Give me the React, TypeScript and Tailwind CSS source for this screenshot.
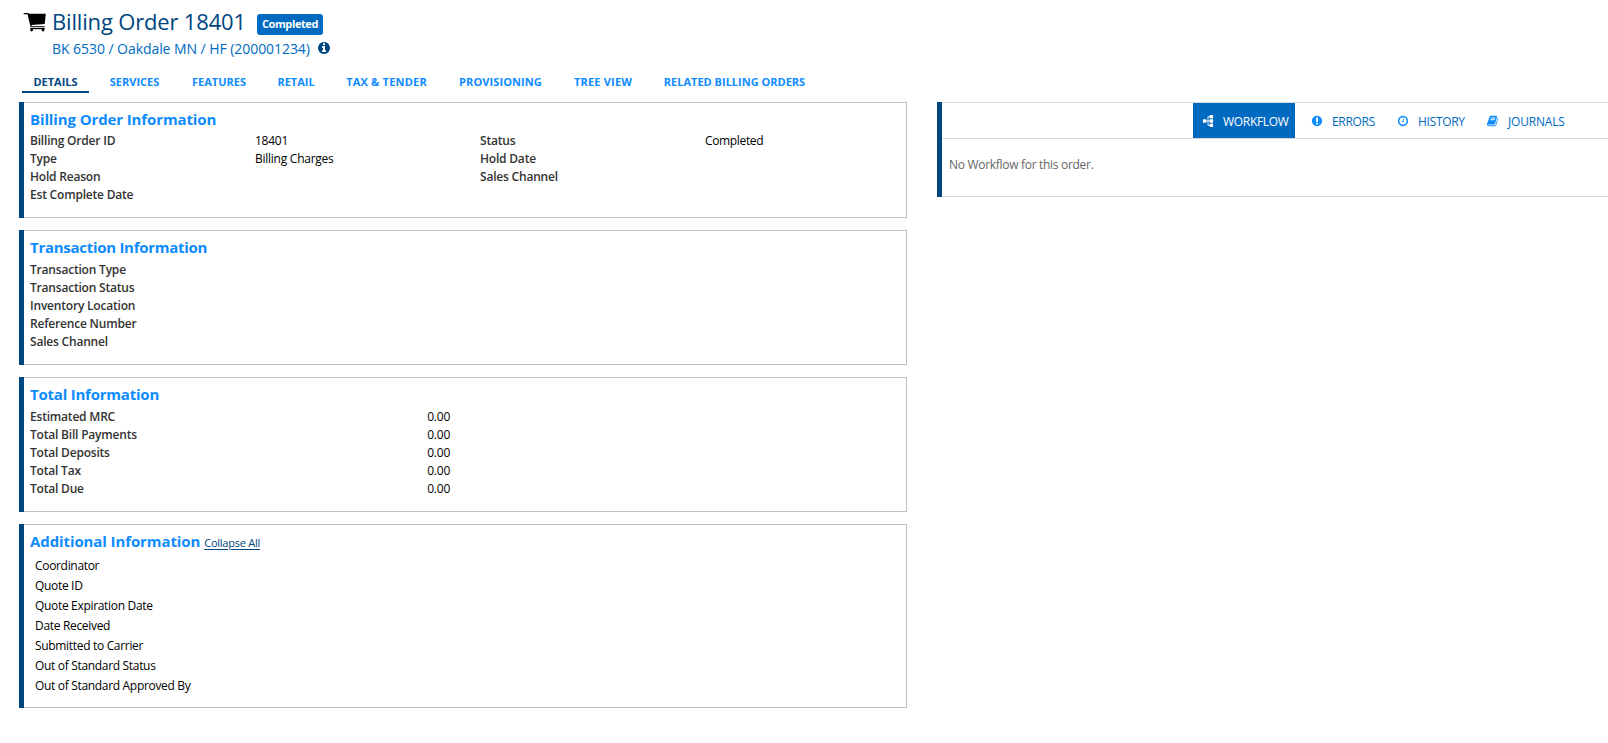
import React from "react";

const SITEMAP =
  "M1792 1248v320q0 40-28 68t-68 28h-320q-40 0-68-28t-28-68v-320q0-40 28-68t68-28h96v-192h-512v192h96q40 0 68 28t28 68v320q0 40-28 68t-68 28h-320q-40 0-68-28t-28-68v-320q0-40 28-68t68-28h96v-192h-512v192h96q40 0 68 28t28 68v320q0 40-28 68t-68 28h-320q-40 0-68-28t-28-68v-320q0-40 28-68t68-28h96v-192q0-52 38-90t90-38h512v-192h-96q-40 0-68-28t-28-68v-320q0-40 28-68t68-28h320q40 0 68 28t28 68v320q0 40-28 68t-68 28h-96v192h512q52 0 90 38t38 90v192h96q40 0 68 28t28 68z";
const EXCLAMATION =
  "M896 128q209 0 385.500 103t279.500 279.500 103 385.500-103 385.500-279.500 279.500-385.500 103-385.500-103-279.500-279.500-103-385.500 103-385.500 279.500-279.500 385.500-103zm128 1247v-190q0-14-9-23.500t-22-9.500h-192q-13 0-23 10t-10 23v190q0 13 10 23t23 10h192q13 0 22-9.500t9-23.500zm-2-344l18-621q0-12-10-18-10-8-24-8h-220q-14 0-24 8-10 6-10 18l17 621q0 10 10 17.500t24 7.500h185q14 0 23.500-7.500t10.500-17.500z";
const CLOCK =
  "M1024 544v448q0 14-9 23t-23 9h-320q-14 0-23-9t-9-23v-64q0-14 9-23t23-9h224v-352q0-14 9-23t23-9h64q14 0 23 9t9 23zm416 352q0-148-73-273t-198-198-273-73-273 73-198 198-73 273 73 273 198 198 273 73 273-73 198-198 73-273zm224 0q0 209-103 385.500t-279.500 279.500-385.500 103-385.500-103-279.500-279.500-103-385.500 103-385.500 279.500-279.500 385.500-103 385.500 103 279.500 279.500 103 385.500z";
const BOOK =
  "M1639 478q40 57 18 129l-275 906q-19 64-76.500 107.500t-122.500 43.500h-923q-77 0-148.500-53.500t-99.500-131.500q-24-67-2-127 0-4 3-27t4-37q1-8-3-21.500t-3-19.500q2-11 8-21t16.500-23.500 16.500-23.500q23-38 45-91.500t30-91.500q3-10 .5-30t-.5-28q3-11 17-28t17-23q21-36 42-92t25-90q1-9-2.500-32t.5-28q4-13 22-30.500t22-22.500q19-26 42.500-84.500t27.500-96.500q1-8-3-25.500t-2-26.500q2-8 9-18t18-23 17-21q8-12 16.500-30.500t15-35 16-36 19.500-32 26.500-23.500 36-11.500 47.500 5.500l-1 3q38-9 51-9h761q74 0 114 56t18 130l-274 906q-36 119-71.500 153.500t-128.500 34.500h-869q-27 0-38 15-11 16-1 43 24 70 144 70h923q29 0 56-15.500t35-41.500l300-987q7-22 5-57 38 15 59 43zm-1064 2q-4 13 2 22.500t20 9.500h608q13 0 25.500-9.500t16.500-22.500l21-64q4-13-2-22.500t-20-9.500h-608q-13 0-25.500 9.500t-16.500 22.500zm-83 256q-4 13 2 22.500t20 9.500h608q13 0 25.500-9.500t16.500-22.500l21-64q4-13-2-22.500t-20-9.500h-608q-13 0-25.500 9.500t-16.500 22.500z";
const INFO =
  "M1152 1376v-160q0-14-9-23t-23-9h-96v-512q0-14-9-23t-23-9h-320q-14 0-23 9t-9 23v160q0 14 9 23t23 9h96v320h-96q-14 0-23 9t-9 23v160q0 14 9 23t23 9h448q14 0 23-9t9-23zm-128-896v-160q0-14-9-23t-23-9h-192q-14 0-23 9t-9 23v160q0 14 9 23t23 9h192q14 0 23-9t9-23zm640 416q0 209-103 385.500t-279.500 279.500-385.500 103-385.500-103-279.500-279.500-103-385.500 103-385.500 279.500-279.500 385.500-103 385.500 103 279.500 279.500 103 385.500z";

function Glyph({ d, className }: { d: string; className: string }) {
  return (
    <svg viewBox="0 0 1792 1792" fill="currentColor" className={className}>
      <path d={d} />
    </svg>
  );
}

function CartIcon() {
  return (
    <svg viewBox="0 0 24 20" className="mt-px h-5 w-6 shrink-0" fill="#000">
      <path d="M.7 1h4.800l.3.700h17l-1.100 10.300L8.400 13l.3 1.300h13v.9H7.600L4.600 2.300H.7z" />
      <path d="M7.300 16h14.500v1.200H7.300z" />
      <circle cx="8.600" cy="18" r="1.400" />
      <circle cx="20" cy="18" r="1.400" />
    </svg>
  );
}

const tabs = [
  { label: "DETAILS", width: "w-[67px]", active: true },
  { label: "SERVICES", width: "w-[74px]" },
  { label: "FEATURES", width: "w-[78px]" },
  { label: "RETAIL", width: "w-[59px]" },
  { label: "TAX & TENDER", width: "w-[105px] tracking-[0.2px]" },
  { label: "PROVISIONING", width: "w-[106px] tracking-[0.1px]" },
  { label: "TREE VIEW", width: "w-[82px] tracking-[0.2px]" },
  { label: "RELATED BILLING ORDERS", width: "w-[164px]" },
];

function Card({
  title,
  height,
  tracking,
  action,
  children,
}: {
  title: string;
  height: string;
  tracking: string;
  action?: string;
  children: React.ReactNode;
}) {
  return (
    <section className={`${height} flex`}>
      <div className="w-[5px] shrink-0 bg-[#00467f]" />
      <div className="flex flex-1 flex-col border border-l-0 border-[#c0c0c0] pl-[6px] pt-1">
        <div className="flex h-[25px] shrink-0 items-start gap-1">
          <h2 className={`${tracking} text-[15px] font-bold leading-6 text-[#0d8bff]`}>{title}</h2>
          {action && (
            <a className="pt-[3px] text-[11px] leading-[22px] tracking-[-0.25px] text-[#00467f] underline underline-offset-2">
              {action}
            </a>
          )}
        </div>
        {children}
      </div>
    </section>
  );
}

function Label({ children }: { children: React.ReactNode }) {
  return <dt className="font-semibold tracking-[-0.2px] text-[#333]">{children}</dt>;
}

const info = [
  ["Billing Order ID", "18401", "Status", "Completed"],
  ["Type", "Billing Charges", "Hold Date", ""],
  ["Hold Reason", "", "Sales Channel", ""],
  ["Est Complete Date", "", "", ""],
];
const transaction = [
  "Transaction Type",
  "Transaction Status",
  "Inventory Location",
  "Reference Number",
  "Sales Channel",
];
const totals = ["Estimated MRC", "Total Bill Payments", "Total Deposits", "Total Tax", "Total Due"];
const additional = [
  "Coordinator",
  "Quote ID",
  "Quote Expiration Date",
  "Date Received",
  "Submitted to Carrier",
  "Out of Standard Status",
  "Out of Standard Approved By",
];

export default function App() {
  return (
    <div className="h-[743px] w-full overflow-hidden bg-white font-['Open_Sans','Noto_Sans',sans-serif] text-[12px] text-black">
      <header className="h-[71px] pl-[23px] pt-[5px]">
        <div className="flex h-[32px] items-center">
          <CartIcon />
          <h1 className="ml-[5px] w-[205px] whitespace-nowrap text-[22px] tracking-[-0.17px] text-[#00467f]">
            Billing Order 18401
          </h1>
          <span className="mt-[6px] flex h-[21px] w-[66px] items-center justify-center rounded-[3px] bg-[#006ac1] pt-px text-[11px] font-bold tracking-[-0.4px] text-white">
            Completed
          </span>
        </div>
        <div className="flex h-[22px] items-center pl-[29px] text-[14px] text-[#006ac1]">
          <span className="w-[265px] whitespace-nowrap tracking-[-0.06px]">BK 6530 / Oakdale MN / HF (200001234)</span>
          <Glyph d={INFO} className="size-[14px] text-[#00467f]" />
        </div>
      </header>

      <nav className="flex h-[22px] gap-[8.500px] pl-[22px]">
        {tabs.map((t) => (
          <a
            key={t.label}
            className={`${t.width} flex shrink-0 items-center justify-center whitespace-nowrap border-b-2 pt-[2px] text-[11px] font-bold ${
              t.active ? "border-[#00467f] text-[#00467f]" : "border-transparent text-[#0d8bff]"
            }`}
          >
            {t.label}
          </a>
        ))}
      </nav>

      <main className="mt-[9px] flex items-start gap-[30px] pl-[19px]">
        <div className="flex w-[888px] shrink-0 flex-col gap-3">
          <Card title="Billing Order Information" height="h-[116px]" tracking="tracking-[-0.12px]">
            <dl className="leading-[18px]">
              {info.map((row) => (
                <div key={row[0]} className="grid h-[18px] grid-cols-[225px_225px_225px_1fr]">
                  <Label>{row[0]}</Label>
                  <dd className="tracking-[-0.25px]">{row[1]}</dd>
                  <Label>{row[2]}</Label>
                  <dd className="tracking-[-0.35px]">{row[3]}</dd>
                </div>
              ))}
            </dl>
          </Card>
          <Card title="Transaction Information" height="h-[135px]" tracking="tracking-[-0.28px]">
            <dl className="pt-px leading-[18px]">
              {transaction.map((t) => (
                <Label key={t}>{t}</Label>
              ))}
            </dl>
          </Card>
          <Card title="Total Information" height="h-[135px]" tracking="tracking-[-0.22px]">
            <dl className="pt-px leading-[18px]">
              {totals.map((t) => (
                <div key={t} className="flex w-[420px] justify-between">
                  <Label>{t}</Label>
                  <dd className="tracking-[-0.25px]">0.00</dd>
                </div>
              ))}
            </dl>
          </Card>
          <Card
            title="Additional Information"
            height="h-[184px]"
            tracking="tracking-[-0.1px]"
            action="Collapse All"
          >
            <ul className="pl-[5px] pt-[2px] leading-5 tracking-[-0.32px]">
              {additional.map((t) => (
                <li key={t}>{t}</li>
              ))}
            </ul>
          </Card>
        </div>

        <aside className="flex h-[95px] flex-1">
          <div className="w-[5px] shrink-0 bg-[#00467f]" />
          <div className="flex-1 border-y border-[#d9d9d9]">
            <div className="flex h-9 border-b border-[#d9d9d9] pl-[251px] tracking-[-0.3px] text-[#006ac1]">
              <a className="flex h-[35px] w-[102px] items-center bg-[#006ac1] pl-[9px] pt-[2px] text-white">
                <Glyph d={SITEMAP} className="mb-px size-3 -rotate-90" />
                <span className="ml-[9px]">WORKFLOW</span>
              </a>
              <a className="flex w-[86px] items-center pl-[16px] pt-[2px]">
                <Glyph d={EXCLAMATION} className="mb-[2px] size-3 text-[#0d8bff]" />
                <span className="ml-[9px]">ERRORS</span>
              </a>
              <a className="flex w-[90px] items-center pl-[16px] pt-[2px]">
                <Glyph d={CLOCK} className="mb-[2px] size-3 text-[#0d8bff]" />
                <span className="ml-[9px]">HISTORY</span>
              </a>
              <a className="flex items-center pl-[16px] pt-[2px]">
                <Glyph d={BOOK} className="mb-[2px] size-3 text-[#0d8bff]" />
                <span className="ml-[9px] tracking-[-0.2px]">JOURNALS</span>
              </a>
            </div>
            <p className="pl-[7px] pt-[17px] leading-[18px] tracking-[-0.3px] text-[#666]">
              No Workflow for this order.
            </p>
          </div>
        </aside>
      </main>
    </div>
  );
}
